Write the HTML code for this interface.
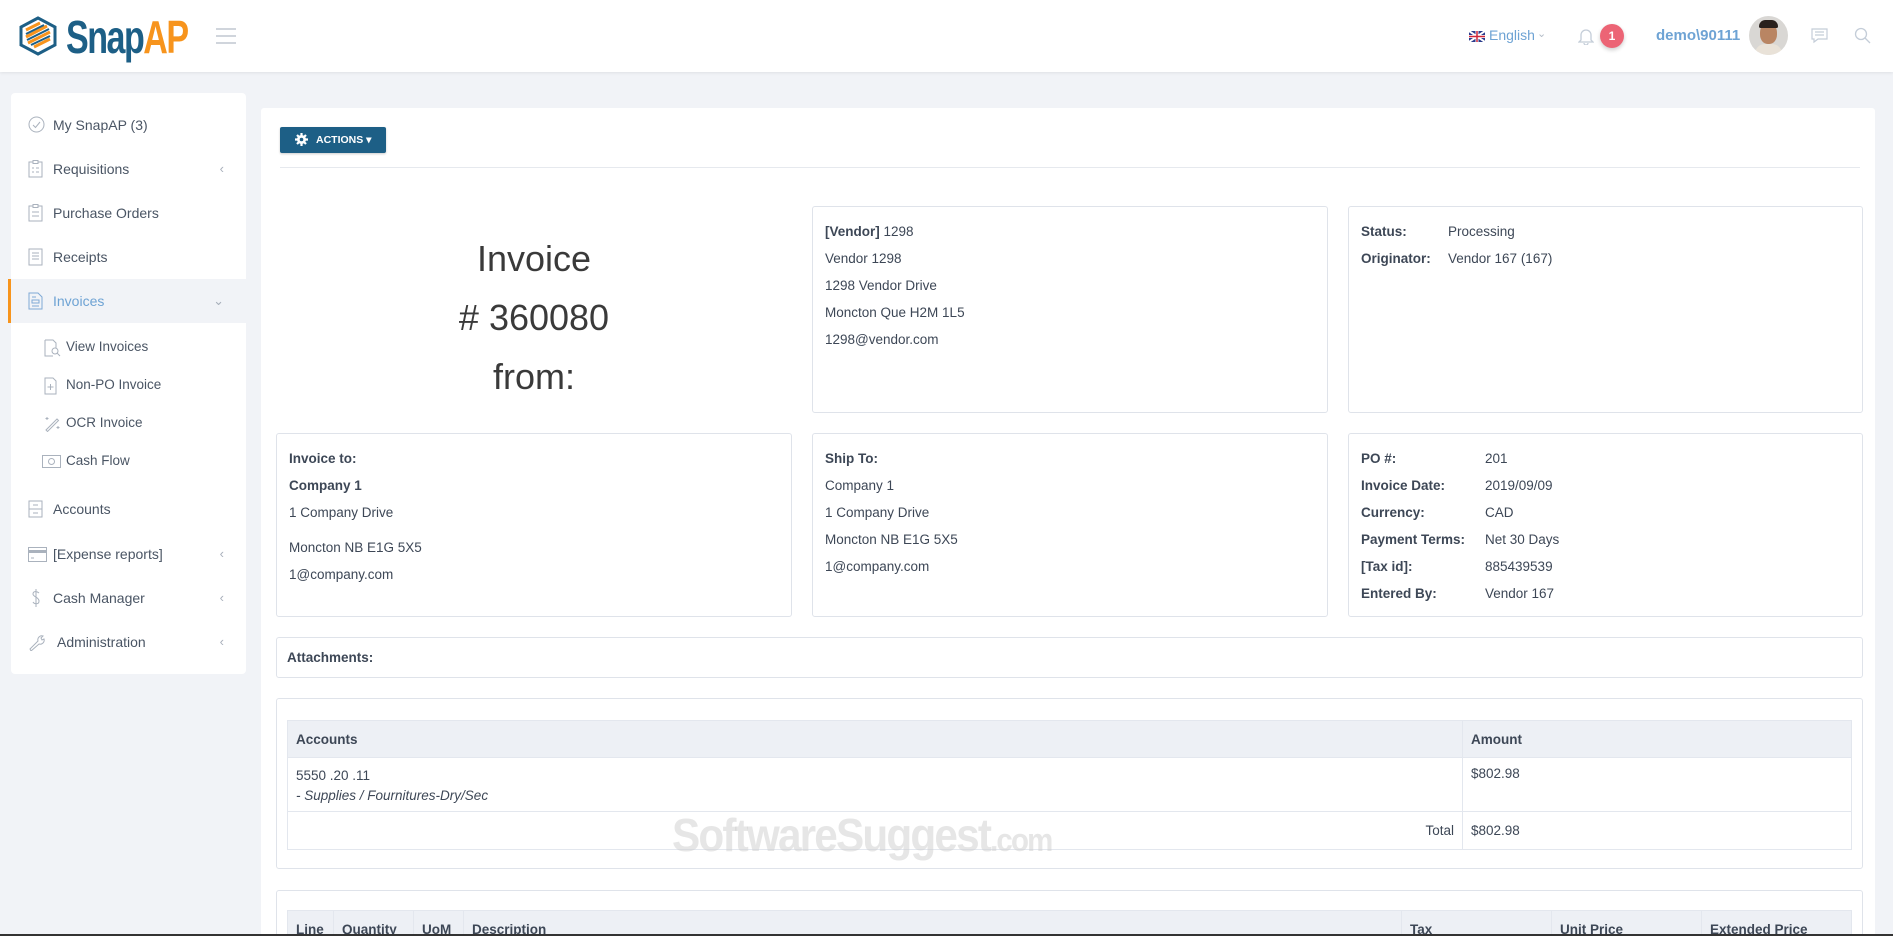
<!DOCTYPE html>
<html><head><meta charset="utf-8"><style>
*{box-sizing:border-box;margin:0;padding:0}
html{overflow:hidden;width:1893px;height:936px}
body{width:1893px;height:936px;overflow:hidden;background:#f1f3f7;font-family:"Liberation Sans",sans-serif;font-size:13.5px;color:#3d4756;position:relative}
.a{position:absolute}
.hdr{left:0;top:0;width:1893px;height:72px;background:#fff;box-shadow:0 1px 3px rgba(0,0,0,.08)}
.side{left:11px;top:93px;width:235px;height:581px;background:#fff;border-radius:4px}
.mi{position:absolute;left:0;width:235px;height:44px;line-height:44px;padding-left:42px;font-size:14px;color:#4a5564}
.mi svg{position:absolute;left:17px;top:13px}
.chev{position:absolute;right:22px;top:0;color:#a8b0bb;font-size:13px}
.sub{position:absolute;left:55px;font-size:13.5px;color:#4a5564}
.sub svg{position:absolute;left:-22px;top:0}
.panel{left:261px;top:108px;width:1614px;height:828px;background:#fff;border-radius:3px}
.box{position:absolute;border:1px solid #dfe3ea;border-radius:3px;background:#fff}
.ln{position:absolute;left:12px;font-size:13.5px;color:#3d4756;white-space:nowrap}
b{color:#3d4756}
table{border-collapse:collapse;position:absolute}
td,th{border:1px solid #e3e7ee;text-align:left;font-size:13.5px;padding:0 8px;color:#3d4756}
th{background:#edf0f5;font-weight:bold;height:37px}
</style></head><body>
<div class="a hdr"></div>
<svg class="a" style="left:18px;top:16px" width="40" height="40" viewBox="0 0 40 40">
<path d="M20 2 L37 11 V29 L20 38 L3 29 V11 Z" fill="none" stroke="#1d5f86" stroke-width="3"/>
<path d="M8 14 L22 7 M8 21 L29 10 M10 27 L32 16 M16 31 L32 23" stroke="#f7941d" stroke-width="3"/>
<path d="M8 18 L26 9 M9 24 L31 13 M13 29 L32 20" stroke="#1d5f86" stroke-width="2"/>
</svg>
<div class="a" style="left:66px;top:10px;font-size:46px;font-weight:bold;letter-spacing:-2px;transform:scaleX(.74);transform-origin:left;color:#1d5f86">Snap<span style="color:#f7941d">AP</span></div>
<div class="a" style="left:216px;top:28px;width:20px;height:2px;background:#d0d5dc;box-shadow:0 7px 0 #d0d5dc,0 14px 0 #d0d5dc"></div>

<svg class="a" style="left:1469px;top:31px" width="16" height="11" viewBox="0 0 16 11"><rect width="16" height="11" fill="#2b3c8c"/><path d="M0 0L16 11M16 0L0 11" stroke="#fff" stroke-width="2"/><path d="M8 0V11M0 5.5H16" stroke="#fff" stroke-width="3"/><path d="M8 0V11M0 5.5H16" stroke="#d0273a" stroke-width="1.5"/></svg>
<div class="a" style="left:1489px;top:27px;font-size:14px;color:#6ea3d4">English</div>
<div class="a" style="left:1537px;top:27px;font-size:11px;color:#b3bcc7">&#8964;</div>
<svg class="a" style="left:1578px;top:27px" width="16" height="18" viewBox="0 0 16 18"><path d="M3 13V8a5 5 0 0 1 10 0v5l2 2H1z M6 16a2 2 0 0 0 4 0" fill="none" stroke="#c4cdd8" stroke-width="1.3"/></svg>
<div class="a" style="left:1600px;top:24px;width:24px;height:24px;border-radius:50%;background:#ec6475;color:#fff;font-size:12px;font-weight:bold;text-align:center;line-height:24px;box-shadow:0 2px 4px rgba(0,0,0,.2)">1</div>
<div class="a" style="left:1656px;top:27px;font-size:15px;font-weight:bold;color:#6ea3d4">demo\90111</div>
<div class="a" style="left:1749px;top:16px;width:39px;height:39px;border-radius:50%;background:#d9d7d4;overflow:hidden"><div style="position:absolute;left:11px;top:7px;width:17px;height:21px;border-radius:45%;background:#b98563"></div><div style="position:absolute;left:10px;top:4px;width:19px;height:8px;border-radius:8px 8px 2px 2px;background:#2a211d"></div><div style="position:absolute;left:6px;top:28px;width:27px;height:15px;border-radius:10px 10px 0 0;background:#e9e2d8"></div></div>
<svg class="a" style="left:1811px;top:28px" width="17" height="16" viewBox="0 0 17 16"><path d="M1 1H16V11H7L3 14V11H1Z M4 4H13M4 7H13" fill="none" stroke="#c4cdd8" stroke-width="1.2"/></svg>
<svg class="a" style="left:1854px;top:27px" width="17" height="17" viewBox="0 0 17 17"><circle cx="7" cy="7" r="5.5" fill="none" stroke="#c4cdd8" stroke-width="1.3"/><path d="M11 11L16 16" stroke="#c4cdd8" stroke-width="1.3"/></svg>

<div class="a side">
<div class="mi" style="top:10px"><svg width="17" height="17" viewBox="0 0 17 17"><circle cx="8.5" cy="8.5" r="7.5" fill="none" stroke="#aab2bd"/><path d="M5 9l2.5 2.5L12 6" fill="none" stroke="#aab2bd"/></svg>My SnapAP (3)</div>
<div class="mi" style="top:54px"><svg width="15" height="18" viewBox="0 0 15 18"><rect x="1" y="2" width="13" height="15" fill="none" stroke="#aab2bd"/><rect x="5" y="0.5" width="5" height="3" fill="#fff" stroke="#aab2bd"/><path d="M4 8h2M8 8h3M4 12h2M8 12h3" stroke="#aab2bd"/></svg>Requisitions<span class="chev">&#8249;</span></div>
<div class="mi" style="top:98px"><svg width="15" height="18" viewBox="0 0 15 18"><rect x="1" y="2" width="13" height="15" fill="none" stroke="#aab2bd"/><rect x="5" y="0.5" width="5" height="3" fill="#fff" stroke="#aab2bd"/><path d="M4 8h7M4 12h7" stroke="#aab2bd"/></svg>Purchase Orders</div>
<div class="mi" style="top:142px"><svg width="15" height="18" viewBox="0 0 15 18"><path d="M1 1h13v16H1z M4 5h7M4 8h7M4 11h7" fill="none" stroke="#aab2bd"/></svg>Receipts</div>
<div class="mi" style="top:186px;left:-3px;width:238px;background:#f1f3f7;border-left:3px solid #f7941d;color:#6ea3d4;padding-left:42px"><svg width="15" height="18" viewBox="0 0 15 18" style="left:17px"><path d="M1 1h9l4 4v12H1z M4 8h7v3H4z M4 5h4M4 14h7" fill="none" stroke="#7fa9d6"/></svg>Invoices<span class="chev">&#8964;</span></div>
<div class="sub" style="top:246px"><svg width="17" height="18" viewBox="0 0 17 18"><path d="M1 1h8l3 3v5 M1 1v16h8" fill="none" stroke="#aab2bd"/><circle cx="11" cy="12" r="3" fill="none" stroke="#aab2bd"/><path d="M13 14l3 3" stroke="#aab2bd"/></svg>View Invoices</div>
<div class="sub" style="top:284px"><svg width="13" height="18" viewBox="0 0 13 18"><path d="M1 1h8l3 3v13H1z M6.5 7v6M3.5 10h6" fill="none" stroke="#aab2bd"/></svg>Non-PO Invoice</div>
<div class="sub" style="top:322px"><svg width="17" height="17" viewBox="0 0 17 17"><path d="M2 15L13 4l1.5 1.5L3.5 16.5z M3 2v3M1.5 3.5h3 M14 11v3M12.5 12.5h3" fill="none" stroke="#aab2bd"/></svg>OCR Invoice</div>
<div class="sub" style="top:360px"><svg width="19" height="13" viewBox="0 0 19 13" style="left:-24px;top:2px"><rect x="0.5" y="0.5" width="18" height="12" fill="none" stroke="#aab2bd"/><circle cx="9.5" cy="6.5" r="3" fill="none" stroke="#aab2bd"/></svg>Cash Flow</div>
<div class="mi" style="top:394px"><svg width="15" height="18" viewBox="0 0 15 18"><path d="M1 1h13v16H1z M1 9h13 M5 5h5M5 13h5" fill="none" stroke="#aab2bd"/></svg>Accounts</div>
<div class="mi" style="top:439px"><svg width="19" height="15" viewBox="0 0 19 15" style="top:15px"><rect x="0.5" y="0.5" width="18" height="14" fill="none" stroke="#aab2bd"/><rect x="0.5" y="3" width="18" height="3" fill="#aab2bd"/><path d="M3 11h3" stroke="#aab2bd"/></svg>[Expense reports]<span class="chev">&#8249;</span></div>
<div class="mi" style="top:483px"><svg width="10" height="18" viewBox="0 0 10 18" style="left:20px"><path d="M8 4C6 2 2 2 2 5s6 3 6 7-5 3-6 1 M5 0v18" fill="none" stroke="#aab2bd"/></svg>Cash Manager<span class="chev">&#8249;</span></div>
<div class="mi" style="top:527px;padding-left:46px"><svg width="17" height="18" viewBox="0 0 17 18"><path d="M2 16l8-8a4 4 0 0 1 5-5l-2 2 1 2 2-1a4 4 0 0 1-5 5l-8 7z" fill="none" stroke="#aab2bd"/></svg>Administration<span class="chev">&#8249;</span></div>
</div>

<div class="a panel"></div>
<div class="a" style="left:280px;top:127px;width:106px;height:26px;background:#1d5f86;border-radius:2px;color:#fff;font-size:10.5px;font-weight:bold;line-height:26px;padding-left:36px;box-shadow:0 1px 2px rgba(0,0,0,.2)">ACTIONS &#9662;</div>
<svg class="a" style="left:295px;top:133px" width="13" height="13" viewBox="0 0 13 13"><circle cx="6.5" cy="6.5" r="4.5" fill="#fff"/><path d="M6.5 0v13M0 6.5h13M2 2l9 9M11 2l-9 9" stroke="#fff" stroke-width="2.2"/><circle cx="6.5" cy="6.5" r="1.8" fill="#1d5f86"/></svg>
<div class="a" style="left:280px;top:167px;width:1580px;height:1px;background:#e6e9ee"></div>

<div class="a" style="left:276px;top:229px;width:516px;text-align:center;font-size:36px;color:#3a3a3a;line-height:59px">Invoice<br># 360080<br>from:</div>

<div class="box" style="left:812px;top:206px;width:516px;height:207px">
<div class="ln" style="top:17px"><b>[Vendor]</b> 1298</div>
<div class="ln" style="top:44px">Vendor 1298</div>
<div class="ln" style="top:71px">1298 Vendor Drive</div>
<div class="ln" style="top:98px">Moncton Que H2M 1L5</div>
<div class="ln" style="top:125px">1298@vendor.com</div>
</div>
<div class="box" style="left:1348px;top:206px;width:515px;height:207px">
<div class="ln" style="top:17px"><b>Status:</b></div><div class="ln" style="top:17px;left:99px">Processing</div>
<div class="ln" style="top:44px"><b>Originator:</b></div><div class="ln" style="top:44px;left:99px">Vendor 167 (167)</div>
</div>

<div class="box" style="left:276px;top:433px;width:516px;height:184px">
<div class="ln" style="top:17px"><b>Invoice to:</b></div>
<div class="ln" style="top:44px"><b>Company 1</b></div>
<div class="ln" style="top:71px">1 Company Drive</div>
<div class="ln" style="top:106px">Moncton NB E1G 5X5</div>
<div class="ln" style="top:133px">1@company.com</div>
</div>
<div class="box" style="left:812px;top:433px;width:516px;height:184px">
<div class="ln" style="top:17px"><b>Ship To:</b></div>
<div class="ln" style="top:44px">Company 1</div>
<div class="ln" style="top:71px">1 Company Drive</div>
<div class="ln" style="top:98px">Moncton NB E1G 5X5</div>
<div class="ln" style="top:125px">1@company.com</div>
</div>
<div class="box" style="left:1348px;top:433px;width:515px;height:184px">
<div class="ln" style="top:17px"><b>PO #:</b></div><div class="ln" style="top:17px;left:136px">201</div>
<div class="ln" style="top:44px"><b>Invoice Date:</b></div><div class="ln" style="top:44px;left:136px">2019/09/09</div>
<div class="ln" style="top:71px"><b>Currency:</b></div><div class="ln" style="top:71px;left:136px">CAD</div>
<div class="ln" style="top:98px"><b>Payment Terms:</b></div><div class="ln" style="top:98px;left:136px">Net 30 Days</div>
<div class="ln" style="top:125px"><b>[Tax id]:</b></div><div class="ln" style="top:125px;left:136px">885439539</div>
<div class="ln" style="top:152px"><b>Entered By:</b></div><div class="ln" style="top:152px;left:136px">Vendor 167</div>
</div>

<div class="box" style="left:276px;top:637px;width:1587px;height:41px"><div class="ln" style="top:12px;left:10px"><b>Attachments:</b></div></div>

<div class="box" style="left:276px;top:698px;width:1587px;height:171px"></div>
<table style="left:287px;top:720px;width:1565px">
<tr><th style="width:1175px">Accounts</th><th>Amount</th></tr>
<tr style="height:54px"><td style="vertical-align:top;padding-top:8px;line-height:20px">5550 .20 .11<br><i>- Supplies / Fournitures-Dry/Sec</i></td><td style="vertical-align:top;padding-top:8px">$802.98</td></tr>
<tr style="height:38px"><td style="text-align:right">Total</td><td>$802.98</td></tr>
</table>
<div class="a" style="left:672px;top:808px;font-size:46px;font-weight:bold;color:rgba(205,205,205,.5);letter-spacing:-2px;transform:scaleX(.92);transform-origin:left">SoftwareSuggest<span style="font-size:32px">.com</span></div>

<div class="box" style="left:276px;top:890px;width:1587px;height:60px"></div>
<table style="left:287px;top:910px;width:1565px">
<tr><th style="width:46px">Line</th><th style="width:80px">Quantity</th><th style="width:50px">UoM</th><th style="width:938px">Description</th><th style="width:150px">Tax</th><th style="width:150px">Unit Price</th><th>Extended Price</th></tr>
</table>
<div class="a" style="left:0;top:934px;width:1893px;height:2px;background:#333"></div>
</body></html>
